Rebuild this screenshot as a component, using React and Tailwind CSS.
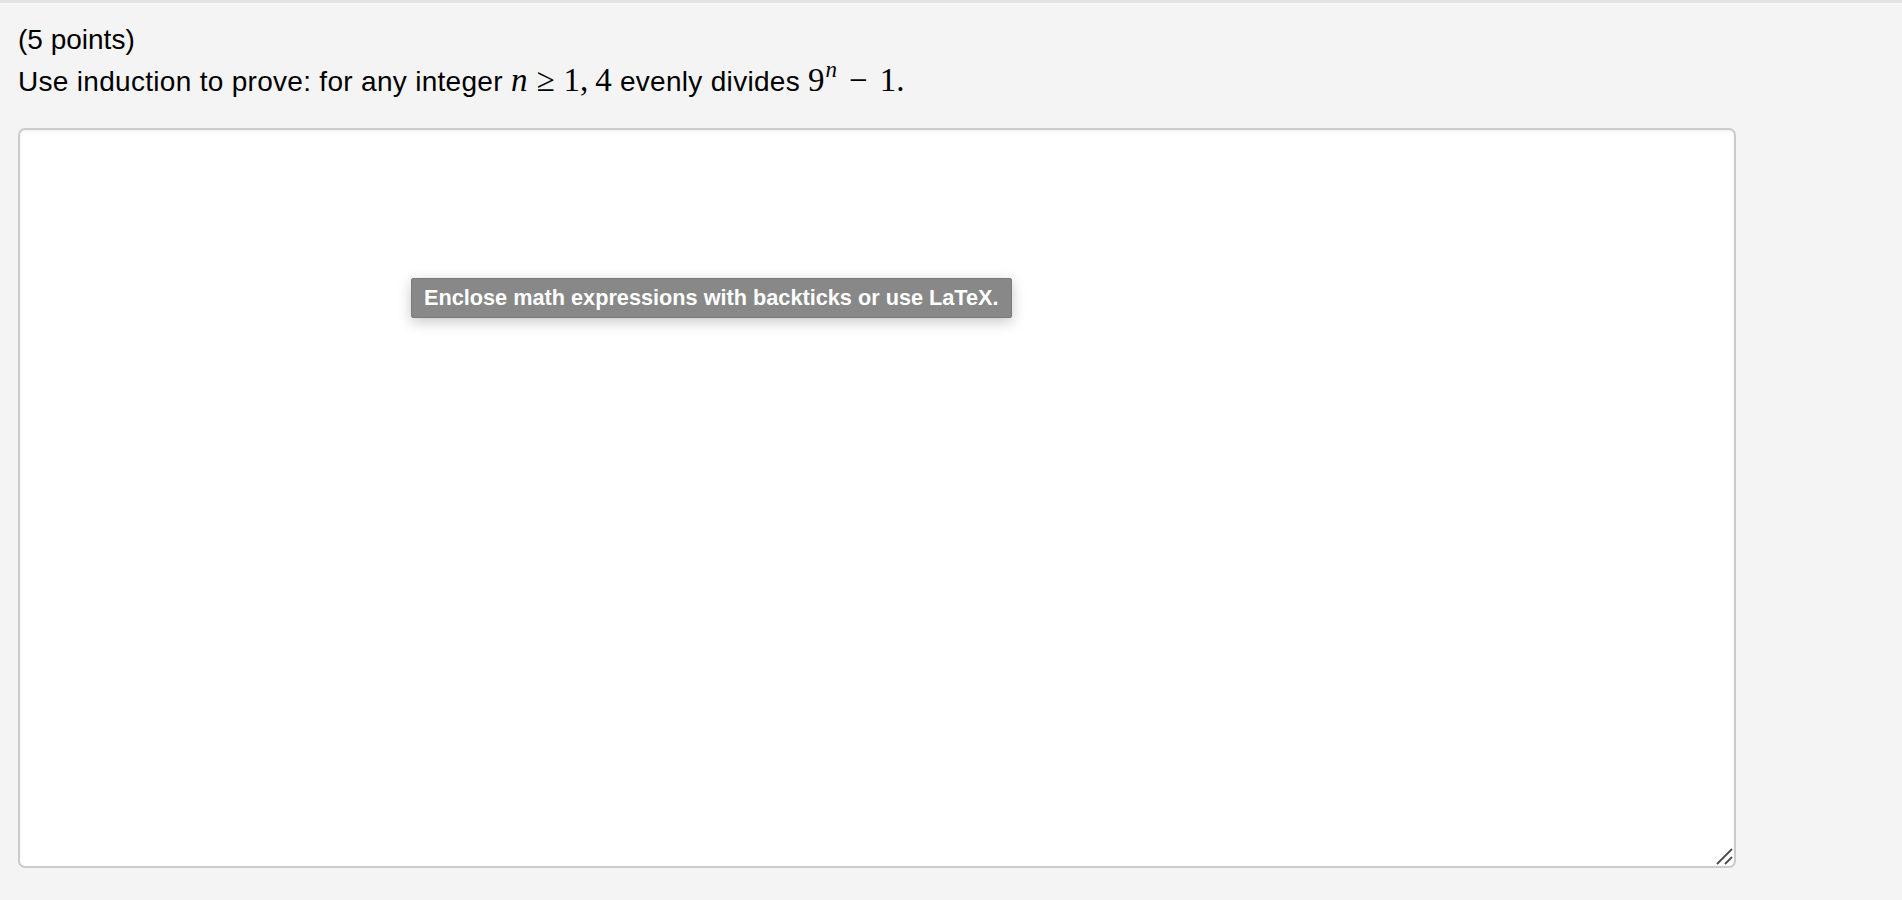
import React from 'react';

const App = () => {
  return (
    <div className="min-h-[900px] bg-[#f4f4f4] border-t-[3px] border-[#e2e2e2] font-['Liberation_Sans',Arial,sans-serif] text-black">
      <div className="pl-[18px] pt-[17px] w-[1736px]">
        {/* Question */}
        <p className="text-[28px] leading-[40px]">(5 points)</p>
        <p className="text-[28px] leading-[40px] tracking-[0.3px]">
          Use induction to prove: for any integer{' '}
          <span className="font-['Liberation_Serif',serif] text-[33px] tracking-normal">
            <i>n</i>
            <span className="mx-[9px]">≥</span>1,<span className="ml-[7px]">4</span>
          </span>{' '}
          evenly divides{' '}
          <span className="font-['Liberation_Serif',serif] text-[33px] tracking-normal">
            9<sup className="italic text-[23px] top-[-0.6em] ml-[1px]">n</sup>
            <span className="mx-[12px]">−</span>1.
          </span>
        </p>

        {/* Answer box */}
        <div className="relative mt-[26px]">
          <textarea className="block w-full h-[740px] bg-white border-2 border-[#cbcbcb] rounded-[7px] outline-none resize-none shadow-[inset_0_1px_2px_rgba(0,0,0,0.08)]" />
          <svg className="absolute right-[3px] bottom-[3px] w-[17px] h-[17px]" viewBox="0 0 17 17">
            <path d="M1 16 L16 1" stroke="#4a4a4a" strokeWidth="1.8" />
            <path d="M9 16 L16 9" stroke="#4a4a4a" strokeWidth="1.8" />
          </svg>
          <div className="absolute left-[393px] top-[150px] px-[12px] h-[40px] flex items-center bg-[#888888] border border-[#7b7b7b] rounded-[2px] shadow-[0_4px_14px_rgba(0,0,0,0.22)] text-white font-bold text-[21.7px]">
            Enclose math expressions with backticks or use LaTeX.
          </div>
        </div>
      </div>
    </div>
  );
};

export default App;
